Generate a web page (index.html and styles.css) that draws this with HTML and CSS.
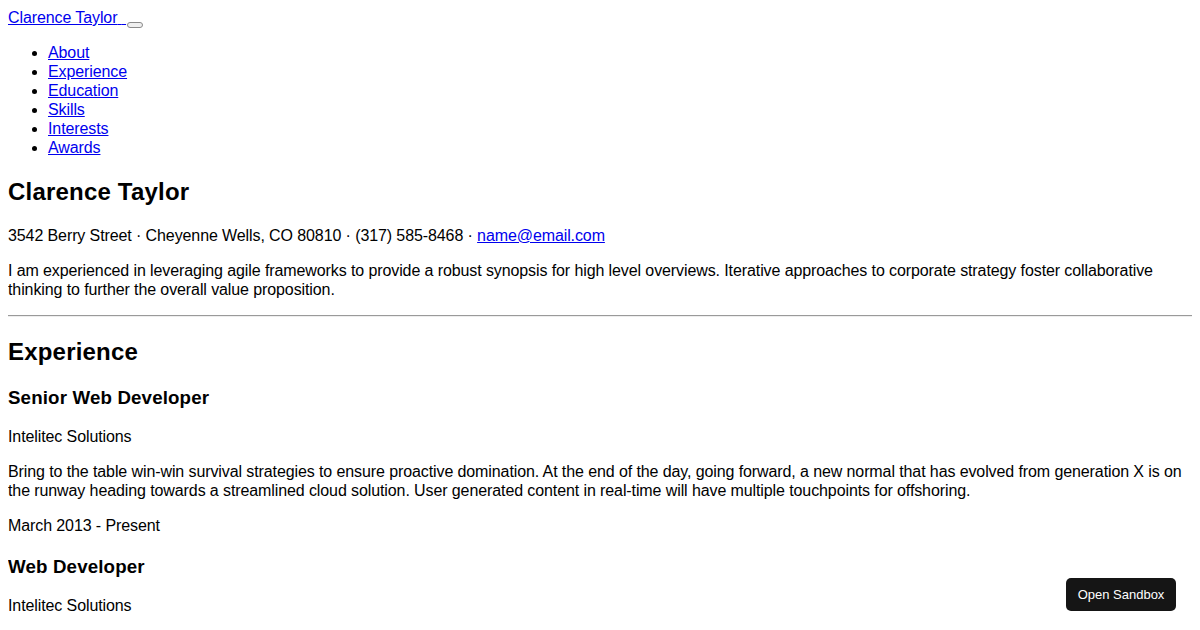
FILE: index.html
```html
<!DOCTYPE html>
<html lang="en">
<head>
<meta charset="UTF-8" />
<meta name="viewport" content="width=device-width, initial-scale=1" />
<title>Clarence Taylor - Resume</title>
<link rel="stylesheet" href="styles.css">
</head>
<body class="page">

  <!-- Navigation -->
  <nav class="nav" id="sideNav">
    <a class="nav-brand" href="#page-top"><span class="brand-name">Clarence Taylor</span> <span class="brand-img">&nbsp;</span></a><button class="nav-toggler" type="button"><span class="toggler-icon"></span></button>
    <ul class="nav-list">
      <li><a href="#about">About</a></li>
      <li><a href="#experience">Experience</a></li>
      <li><a href="#education">Education</a></li>
      <li><a href="#skills">Skills</a></li>
      <li><a href="#interests">Interests</a></li>
      <li><a href="#awards">Awards</a></li>
    </ul>
  </nav>

  <!-- About -->
  <section class="resume-section" id="about">
    <h1 class="name">Clarence Taylor</h1>
    <p class="contact">3542 Berry Street &middot; Cheyenne Wells, CO 80810 &middot; (317) 585-8468 &middot; <a href="mailto:name@email.com">name@email.com</a></p>
    <p class="lead">I am experienced in leveraging agile frameworks to provide a robust synopsis for high level overviews. Iterative approaches to corporate strategy foster collaborative thinking to further the overall value proposition.</p>
  </section>

  <hr class="divider">

  <!-- Experience -->
  <section class="resume-section" id="experience">
    <h2 class="section-title">Experience</h2>

    <div class="job">
      <h3 class="job-title">Senior Web Developer</h3>
      <p class="job-company">Intelitec Solutions</p>
      <p class="job-text">Bring to the table win-win survival strategies to ensure proactive domination. At the end of the day, going forward, a new normal that has evolved from generation X is on the runway heading towards a streamlined cloud solution. User generated content in real-time will have multiple touchpoints for offshoring.</p>
      <p class="job-date">March 2013 - Present</p>
    </div>

    <div class="job">
      <h3 class="job-title">Web Developer</h3>
      <p class="job-company">Intelitec Solutions</p>
      <p class="job-text">Capitalize on low hanging fruit to identify a ballpark value added activity to beta test. Override the digital divide with additional clickthroughs from DevOps.</p>
      <p class="job-date">December 2011 - March 2013</p>
    </div>
  </section>

  <button class="sandbox-btn" type="button">Open Sandbox</button>

</body>
</html>
```

FILE: styles.css
```css
.page {
  margin: 8px;
  font-family: 'Liberation Sans', Arial, sans-serif;
  font-size: 16px;
  line-height: 19px;
  letter-spacing: -0.1px;
  color: #000;
}

a {
  color: #0000ee;
}

/* Nav */
.nav-toggler {
  width: 16px;
  height: 6px;
  padding: 0;
  margin-left: 1px;
  border: 1px solid #8a8a8a;
  border-radius: 3px;
  background: #efefef;
  vertical-align: -4px;
}

.nav-list {
  margin: 15px 0 16px;
  padding-left: 40px;
}

/* Sections */
.name,
.section-title {
  font-size: 24px;
  line-height: 28px;
  letter-spacing: 0.2px;
  margin: 21px 0 20px;
}

.resume-section p {
  margin: 16px 0;
}

.divider {
  margin: 8px 0;
  border: none;
  border-top: 1px solid #9a9a9a;
  border-bottom: 1px solid #eee;
}

.job-title {
  font-size: 18.72px;
  line-height: 22px;
  letter-spacing: 0.15px;
  margin: 21px 0 18px;
}

/* Floating button */
.sandbox-btn {
  position: fixed;
  right: 24px;
  bottom: 19px;
  width: 110px;
  height: 33px;
  background: #151515;
  color: #fff;
  border: none;
  border-radius: 5px;
  font-family: 'Liberation Sans', Arial, sans-serif;
  font-size: 13px;
  letter-spacing: 0;
}
```
